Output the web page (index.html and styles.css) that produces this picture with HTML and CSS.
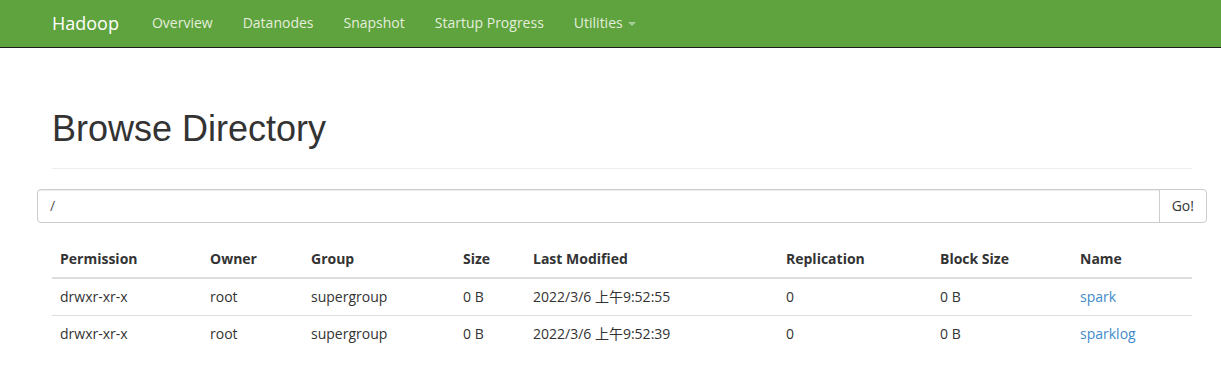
FILE: index.html
```html
<!DOCTYPE html>
<html lang="en">
<head>
  <meta charset="UTF-8" />
  <title>Browsing HDFS</title>
  <link rel="stylesheet" href="styles.css">
</head>
<body>

  <header class="navbar">
    <div class="container nav-inner">
      <a class="brand" href="#">Hadoop</a>
      <ul class="nav">
        <li><a href="#">Overview</a></li>
        <li><a href="#">Datanodes</a></li>
        <li><a href="#">Snapshot</a></li>
        <li><a href="#">Startup Progress</a></li>
        <li><a href="#">Utilities <span class="caret"></span></a></li>
      </ul>
    </div>
  </header>

  <div class="container main">
    <div class="page-header">
      <h1>Browse Directory</h1>
    </div>

    <form class="row" onsubmit="return false;">
      <div class="input-group">
        <input type="text" class="form-control" value="/">
        <button class="btn" type="button">Go!</button>
      </div>
    </form>

    <table class="table">
      <colgroup>
        <col class="c-perm"><col class="c-owner"><col class="c-group"><col class="c-size">
        <col class="c-mod"><col class="c-repl"><col class="c-block"><col class="c-name">
      </colgroup>
      <thead>
        <tr>
          <th>Permission</th><th>Owner</th><th>Group</th><th>Size</th>
          <th>Last Modified</th><th>Replication</th><th>Block Size</th><th>Name</th>
        </tr>
      </thead>
      <tbody>
        <tr>
          <td>drwxr-xr-x</td><td>root</td><td>supergroup</td><td>0 B</td>
          <td>2022/3/6 上午9:52:55</td><td>0</td><td>0 B</td><td><a href="#">spark</a></td>
        </tr>
        <tr>
          <td>drwxr-xr-x</td><td>root</td><td>supergroup</td><td>0 B</td>
          <td>2022/3/6 上午9:52:39</td><td>0</td><td>0 B</td><td><a href="#">sparklog</a></td>
        </tr>
      </tbody>
    </table>
  </div>

</body>
</html>
```

FILE: styles.css
```css
* { box-sizing: border-box; }
body {
  margin: 0;
  font-family: 'Open Sans', 'Noto Sans CJK SC', sans-serif;
  font-size: 14px;
  line-height: 1.42857;
  color: #333;
  background: #fff;
}
a { color: #428bca; text-decoration: none; }

.container {
  width: 1170px;
  margin-left: 37px;
  padding: 0 15px;
}
.main {
  padding-top: 21px;
}

/* navbar */
.navbar {
  background: #5fa33e;
  border-bottom: 1px solid #1b1b1b;
  height: 48px;
}
.nav-inner {
  display: flex;
  align-items: center;
  height: 46px;
}
.brand {
  color: #fff;
  font-size: 18px;
  line-height: 20px;
  padding: 0 18px 0 0;
}
.nav {
  list-style: none;
  margin: 0;
  padding: 0;
  display: flex;
}
.nav a {
  display: block;
  color: #e4eedd;
  line-height: 20px;
  padding: 0 15px;
}
.caret {
  display: inline-block;
  width: 0;
  height: 0;
  margin-left: 2px;
  vertical-align: middle;
  border-top: 4px solid #a9cf97;
  border-left: 4px solid transparent;
  border-right: 4px solid transparent;
}

/* header */
.page-header {
  margin: 40px 0 20px;
  padding-bottom: 9px;
  border-bottom: 1px solid #eee;
}
.page-header h1 {
  margin: 20px 0 10px;
  font-family: 'Liberation Sans', Arial, sans-serif;
  font-weight: 400;
  font-size: 36px;
  line-height: 1.1;
  color: #333;
}

/* path form */
.row {
  margin: 0 -15px;
}
.input-group {
  display: flex;
  height: 34px;
}
.form-control {
  flex: 1;
  height: 34px;
  padding: 6px 12px;
  font: inherit;
  color: #555;
  border: 1px solid #ccc;
  border-radius: 4px 0 0 4px;
  box-shadow: inset 0 1px 1px rgba(0,0,0,0.075);
}
.btn {
  height: 34px;
  padding: 6px 12px;
  margin-left: -1px;
  font: inherit;
  color: #333;
  background: #fff;
  border: 1px solid #ccc;
  border-radius: 0 4px 4px 0;
}

/* listing */
.table {
  width: 100%;
  margin-top: 18px;
  border-collapse: collapse;
}
.table th, .table td {
  padding: 8px;
  text-align: left;
  vertical-align: top;
  line-height: 20px;
}
.table th {
  font-weight: 700;
  border-bottom: 2px solid #ddd;
}
.table td {
  border-top: 1px solid #ddd;
}
.table tbody tr:first-child td { border-top: 0; }
.c-perm { width: 150px; }
.c-owner { width: 101px; }
.c-group { width: 152px; }
.c-size { width: 70px; }
.c-mod { width: 253px; }
.c-repl { width: 154px; }
.c-block { width: 140px; }
.c-name { width: 120px; }
```
